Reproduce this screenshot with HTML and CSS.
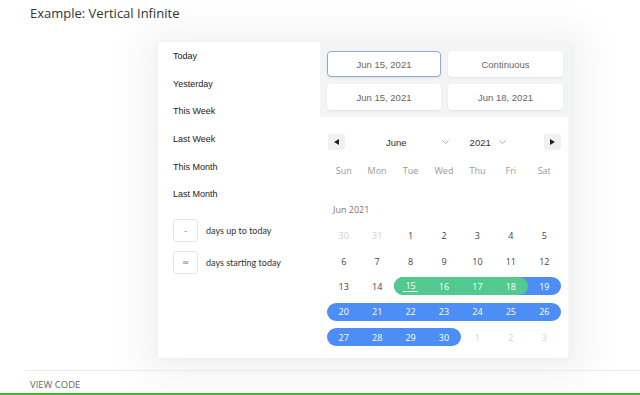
FILE: index.html
```html
<!DOCTYPE html>
<html lang="en">
<head>
  <meta charset="UTF-8">
  <meta name="viewport" content="width=device-width, initial-scale=1.0">
  <title>Vertical Infinite</title>
  <link rel="stylesheet" href="styles.css">
</head>
<body>
  <div class="example-title">Example: Vertical Infinite</div>

  <div class="demo">
    <div class="picker">
      <!-- Presets -->
      <div class="presets">
        <div class="preset">Today</div>
        <div class="preset">Yesterday</div>
        <div class="preset">This Week</div>
        <div class="preset">Last Week</div>
        <div class="preset">This Month</div>
        <div class="preset">Last Month</div>

        <div class="relative-inputs">
          <div class="relative-row">
            <div class="relative-box">-</div>
            <span class="relative-label">days up to today</span>
          </div>
          <div class="relative-row">
            <div class="relative-box">∞</div>
            <span class="relative-label">days starting today</span>
          </div>
        </div>
      </div>

      <!-- Date inputs + calendar -->
      <div class="main">
        <div class="date-inputs">
          <div class="date-input active">Jun 15, 2021</div>
          <div class="date-input">Continuous</div>
          <div class="date-input">Jun 15, 2021</div>
          <div class="date-input">Jun 18, 2021</div>
        </div>

        <div class="calendar">
          <div class="cal-header">
            <button class="nav-btn">
              <svg width="5" height="6" viewBox="0 0 5 6"><polygon points="5,0 5,6 0,3" fill="#222"/></svg>
            </button>
            <div class="selects">
              <span class="month-name">June</span>
              <svg class="chev chev-month" width="7" height="4" viewBox="0 0 7 4"><polyline points="0.5,0.5 3.5,3.5 6.5,0.5" fill="none" stroke="#999" stroke-width="0.8"/></svg>
              <span class="year-name">2021</span>
              <svg class="chev chev-year" width="7" height="4" viewBox="0 0 7 4"><polyline points="0.5,0.5 3.5,3.5 6.5,0.5" fill="none" stroke="#999" stroke-width="0.8"/></svg>
            </div>
            <button class="nav-btn">
              <svg width="5" height="6" viewBox="0 0 5 6"><polygon points="0,0 0,6 5,3" fill="#222"/></svg>
            </button>
          </div>

          <div class="weekdays">
            <span>Sun</span><span>Mon</span><span>Tue</span><span>Wed</span><span>Thu</span><span>Fri</span><span>Sat</span>
          </div>

          <div class="month-label">Jun 2021</div>

          <div class="days">
            <div class="day passive"><span class="pill"><span class="num">30</span></span></div>
            <div class="day passive"><span class="pill"><span class="num">31</span></span></div>
            <div class="day"><span class="pill"><span class="num">1</span></span></div>
            <div class="day"><span class="pill"><span class="num">2</span></span></div>
            <div class="day"><span class="pill"><span class="num">3</span></span></div>
            <div class="day"><span class="pill"><span class="num">4</span></span></div>
            <div class="day"><span class="pill"><span class="num">5</span></span></div>

            <div class="day"><span class="pill"><span class="num">6</span></span></div>
            <div class="day"><span class="pill"><span class="num">7</span></span></div>
            <div class="day"><span class="pill"><span class="num">8</span></span></div>
            <div class="day"><span class="pill"><span class="num">9</span></span></div>
            <div class="day"><span class="pill"><span class="num">10</span></span></div>
            <div class="day"><span class="pill"><span class="num">11</span></span></div>
            <div class="day"><span class="pill"><span class="num">12</span></span></div>

            <div class="day"><span class="pill"><span class="num">13</span></span></div>
            <div class="day"><span class="pill"><span class="num">14</span></span></div>
            <div class="day in-range start"><span class="pill"><span class="num hl hl-start"><span class="today">15</span></span></span></div>
            <div class="day in-range"><span class="pill"><span class="num hl">16</span></span></div>
            <div class="day in-range"><span class="pill"><span class="num hl">17</span></span></div>
            <div class="day in-range"><span class="pill"><span class="num hl hl-end">18</span></span></div>
            <div class="day in-range end"><span class="pill"><span class="num">19</span></span></div>

            <div class="day in-range start"><span class="pill"><span class="num">20</span></span></div>
            <div class="day in-range"><span class="pill"><span class="num">21</span></span></div>
            <div class="day in-range"><span class="pill"><span class="num">22</span></span></div>
            <div class="day in-range"><span class="pill"><span class="num">23</span></span></div>
            <div class="day in-range"><span class="pill"><span class="num">24</span></span></div>
            <div class="day in-range"><span class="pill"><span class="num">25</span></span></div>
            <div class="day in-range end"><span class="pill"><span class="num">26</span></span></div>

            <div class="day in-range start"><span class="pill"><span class="num">27</span></span></div>
            <div class="day in-range"><span class="pill"><span class="num">28</span></span></div>
            <div class="day in-range"><span class="pill"><span class="num">29</span></span></div>
            <div class="day in-range end"><span class="pill"><span class="num">30</span></span></div>
            <div class="day passive"><span class="pill"><span class="num">1</span></span></div>
            <div class="day passive"><span class="pill"><span class="num">2</span></span></div>
            <div class="day passive"><span class="pill"><span class="num">3</span></span></div>
          </div>
        </div>
      </div>
    </div>
  </div>

  <div class="footer">
    <div class="footer-inner">
      <div class="view-code">VIEW CODE</div>
    </div>
  </div>
</body>
</html>
```

FILE: styles.css
```css
:root {
  --range: 76 142 246;
  --hover: 82 201 142;
  --muted: 153 153 153;
  --panel: 243 244 245;
}

* {
  box-sizing: border-box;
}

body {
  margin: 0;
  font-family: "Open Sans", "Liberation Sans", sans-serif;
  background: #fff;
  color: #333;
  height: 395px;
  overflow: hidden;
}

.example-title {
  height: 42px;
  padding: 4px 30px 0;
  font-size: 13px;
  line-height: 18px;
  color: #333;
}

.demo {
  padding-left: 158px;
  height: 328px;
}

/* Picker card */
.picker {
  display: flex;
  width: 414px;
  height: 316px;
  background: #fff;
  box-shadow: 0 4px 36px 16px rgba(0, 0, 0, 0.05), 0 1px 6px rgba(0, 0, 0, 0.04);
}

.presets {
  width: 162px;
  padding: 1px 0 0 15px;
  font-family: "Liberation Sans", Arial, sans-serif;
}

.preset {
  height: 27.7px;
  line-height: 27.7px;
  font-size: 9px;
  color: #222;
}

.relative-inputs {
  margin-top: 10px;
  display: flex;
  flex-direction: column;
  gap: 9px;
}

.relative-row {
  display: flex;
  align-items: center;
  gap: 8px;
}

.relative-box {
  width: 25px;
  height: 23px;
  border: 1px solid #e6e6e6;
  border-radius: 3px;
  display: flex;
  align-items: center;
  justify-content: center;
  font-size: 8px;
  color: #666;
}

.relative-label {
  font-family: Lato, "Open Sans", sans-serif;
  font-size: 9px;
  color: #333;
}

.main {
  flex: 1;
  display: flex;
  flex-direction: column;
  background: rgb(var(--panel));
}

.date-inputs {
  display: grid;
  grid-template-columns: 114px 115px;
  gap: 7px;
  padding: 9px 0 7px 7px;
}

.date-input {
  height: 26px;
  display: flex;
  align-items: center;
  justify-content: center;
  background: #fff;
  border: 1px solid transparent;
  border-radius: 4px;
  box-shadow: 0 1px 2px rgba(0, 0, 0, 0.08);
  font-family: "Liberation Sans", Arial, sans-serif;
  font-size: 9.5px;
  color: #666;
}

.date-input.active {
  border-color: #8eaadb;
}

/* Calendar */
.calendar {
  flex: 1;
  margin-right: 4px;
  background: #fff;
  padding: 17px 7px 0;
}

.cal-header {
  display: flex;
  align-items: center;
  justify-content: space-between;
  height: 16px;
}

.nav-btn {
  width: 17px;
  height: 16px;
  border: none;
  border-radius: 3px;
  background: #eff0f2;
  display: flex;
  align-items: center;
  justify-content: center;
  padding: 0;
  margin-left: 1px;
}

.nav-btn:last-child {
  margin-left: 0;
}

.selects {
  flex: 1;
  display: flex;
  align-items: center;
  padding-left: 41px;
  font-family: "Liberation Sans", Arial, sans-serif;
  font-size: 9.5px;
  color: #333;
}

.chev-month {
  margin-left: 35px;
}

.year-name {
  margin-left: 21px;
}

.chev-year {
  margin-left: 8px;
}

.weekdays {
  display: grid;
  grid-template-columns: repeat(7, 1fr);
  margin-top: 13px;
  height: 16px;
  line-height: 16px;
  text-align: center;
  font-size: 9px;
  color: rgb(var(--muted));
}

.month-label {
  margin-top: 24px;
  padding-left: 6px;
  height: 14px;
  line-height: 14px;
  font-size: 9px;
  color: #777;
}

.days {
  display: grid;
  grid-template-columns: repeat(7, 1fr);
  grid-auto-rows: 25.4px;
  margin-top: 6px;
  font-size: 9px;
  color: #444;
}

.day {
  display: flex;
  align-items: center;
}

.pill {
  width: 100%;
  height: 18px;
  display: flex;
}

.num {
  flex: 1;
  display: flex;
  align-items: center;
  justify-content: center;
}

.day.passive {
  color: #d0d0d0;
}

.day.in-range .pill {
  background: rgb(var(--range));
  color: #fff;
}

.day.start .pill {
  border-radius: 9px 0 0 9px;
}

.day.end .pill {
  border-radius: 0 9px 9px 0;
}

.num.hl {
  background: rgb(var(--hover));
}

.num.hl-start {
  border-radius: 9px 0 0 9px;
}

.num.hl-end {
  border-radius: 0 9px 9px 0;
}

.today {
  border-bottom: 1.5px solid #fff;
  padding: 0 2px;
  line-height: 11px;
}

/* Footer */
.footer {
  height: 25px;
  border-bottom: 2px solid #3dbb2b;
}

.footer-inner {
  margin-left: 25px;
  border-top: 1px solid #ebebeb;
}

.view-code {
  margin-left: 5px;
  padding-top: 6px;
  font-size: 9.5px;
  line-height: 16px;
  color: #666;
}
```
